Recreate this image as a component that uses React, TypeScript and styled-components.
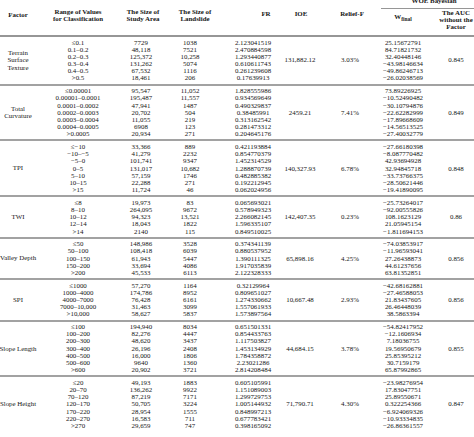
import React from "react";
import styled, { createGlobalStyle } from "styled-components";

const GlobalStyle = createGlobalStyle`
  html, body {
    margin: 0;
    padding: 0;
    background: #ffffff;
    overflow: hidden;
  }
  body {
    width: 474px;
    height: 437px;
    font-family: "Liberation Serif", "Times New Roman", serif;
    font-size: 6.9px;
    color: #161616;
  }
`;

const W = {
  factor: 36,
  range: 84,
  study: 42,
  slide: 56,
  fr: 70,
  ioe: 24,
  relief: 69,
  w: 44,
  auc: 62,
};

type Row = [string, string, string, string, string];

interface GroupData {
  label: string[];
  ioe: string;
  relief: string;
  auc: string;
  rows: Row[];
}

const groups: GroupData[] = [
  {
    label: ["Terrain", "Surface", "Texture"],
    ioe: "131,882.12",
    relief: "3.03%",
    auc: "0.845",
    rows: [
      ["≤0.1", "7729", "1038", "2.123041519", "25.15672791"],
      ["0.1–0.2", "48,118", "7521", "2.470884598", "84.71821732"],
      ["0.2–0.3", "125,372", "10,258", "1.293440877", "32.40448146"],
      ["0.3–0.4", "131,262", "5074", "0.610611743", "−43.98146634"],
      ["0.4–0.5", "67,532", "1116", "0.261239608", "−49.86246713"],
      [">0.5", "18,461", "206", "0.17639913", "−26.02038569"],
    ],
  },
  {
    label: ["Total", "Curvature"],
    ioe: "2459.21",
    relief: "7.41%",
    auc: "0.849",
    rows: [
      ["≤0.00001", "95,547", "11,052", "1.828555986", "73.89226925"],
      ["0.00001–0.0001", "195,487", "11,557", "0.934569649", "−10.52490482"],
      ["0.0001–0.0002", "47,941", "1487", "0.490329837", "−30.10794876"],
      ["0.0002–0.0003", "20,702", "504", "0.38485991", "−22.62282999"],
      ["0.0003–0.0004", "11,055", "219", "0.313162542", "−17.89668609"],
      ["0.0004–0.0005", "6908", "123", "0.281473312", "−14.56513525"],
      [">0.0005", "20,934", "271", "0.204645176", "−27.40032779"],
    ],
  },
  {
    label: ["TPI"],
    ioe: "140,327.93",
    relief: "6.78%",
    auc: "0.848",
    rows: [
      ["≤−10", "33,366", "889", "0.421193884", "−27.66180398"],
      ["−10–−5", "41,279", "2232", "0.854770379", "−8.087770482"],
      ["−5–0", "101,741", "9347", "1.452314529", "42.93694928"],
      ["0–5", "131,017", "10,682", "1.288870739", "32.94845718"],
      ["5–10", "57,159", "1746", "0.482885382", "−33.73766375"],
      ["10–15", "22,288", "271", "0.192212945", "−28.50621446"],
      [">15", "11,724", "46", "0.062024956", "−19.41890095"],
    ],
  },
  {
    label: ["TWI"],
    ioe: "142,407.35",
    relief: "0.23%",
    auc: "0.86",
    rows: [
      ["≤8", "19,973", "83", "0.065693021", "−25.73264017"],
      ["8–10", "264,095", "9672", "0.578949323", "−92.00555826"],
      ["10–12", "94,323", "13,521", "2.266082145", "108.1623129"],
      ["12–14", "18,043", "1822", "1.596335107", "21.05945154"],
      [">14", "2140", "115", "0.849510025", "−1.811694153"],
    ],
  },
  {
    label: ["Valley Depth"],
    ioe: "65,898.16",
    relief: "4.25%",
    auc: "0.856",
    rows: [
      ["≤50", "148,986", "3528", "0.374341139", "−74.03853917"],
      ["50–100", "108,418", "6039", "0.880537952", "−11.96593041"],
      ["100–150", "61,943", "5447", "1.390111325", "27.26438873"],
      ["150–200", "33,694", "4086", "1.917035839", "44.61237656"],
      [">200", "45,533", "6113", "2.122328333", "63.81352851"],
    ],
  },
  {
    label: ["SPI"],
    ioe: "10,667.48",
    relief: "2.93%",
    auc: "0.856",
    rows: [
      ["≤1000", "57,270", "1164", "0.32129964", "−42.68162881"],
      ["1000–4000", "174,786", "8952", "0.809651027", "−27.46588053"],
      ["4000–7000", "76,428", "6161", "1.274330662", "21.83437605"],
      ["7000–10,000", "31,463", "3099", "1.557061933", "26.46448039"],
      [">10,000", "58,627", "5837", "1.573897564", "38.5863394"],
    ],
  },
  {
    label: ["Slope Length"],
    ioe: "44,684.15",
    relief: "3.78%",
    auc: "0.855",
    rows: [
      ["≤100", "194,940", "8034", "0.651501331", "−54.82417952"],
      ["100–200", "82,276", "4447", "0.854433763", "−12.1606934"],
      ["200–300", "48,620", "3437", "1.117503827", "7.18036755"],
      ["300–400", "26,196", "2408", "1.453134929", "19.56950679"],
      ["400–500", "16,000", "1806", "1.784358872", "25.85395212"],
      ["500–600", "9640", "1360", "2.23021286", "30.7159179"],
      [">600", "20,902", "3721", "2.814208484", "65.87992865"],
    ],
  },
  {
    label: ["Slope Height"],
    ioe: "71,790.71",
    relief: "4.30%",
    auc: "0.847",
    rows: [
      ["≤20", "49,193", "1883", "0.605105991", "−23.98276954"],
      ["20–70", "136,262", "9922", "1.151089003", "17.83047751"],
      ["70–120", "87,219", "7171", "1.299729753", "25.89550671"],
      ["120–170", "50,705", "3224", "1.005144932", "0.322254366"],
      ["170–220", "28,954", "1555", "0.848997213", "−6.924069326"],
      ["220–270", "16,583", "711", "0.677783421", "−10.93334835"],
      [">270", "29,659", "747", "0.398165092", "−26.86361557"],
    ],
  },
];

const Table = styled.div`
  width: 487px;
  display: flex;
  flex-direction: column;
`;

const Header = styled.div`
  display: flex;
  height: 35px;
  border-bottom: 2px solid #969696;
  font-weight: bold;
  overflow: hidden;
`;

const HeadCell = styled.div<{ $w: number; $pl?: number; $pb?: number }>`
  flex: none;
  box-sizing: border-box;
  width: ${(p) => p.$w}px;
  padding-left: ${(p) => p.$pl ?? 0}px;
  padding-bottom: ${(p) => p.$pb ?? 4}px;
  display: flex;
  align-items: center;
  justify-content: center;
  white-space: nowrap;
`;

const HeadText = styled.span`
  display: block;
  text-align: center;
  line-height: 6.8px;
`;

const WoeGroup = styled.div`
  flex: none;
  width: ${W.w + W.auc}px;
  display: flex;
  flex-direction: column;
`;

const WoeTitle = styled.div`
  flex: none;
  box-sizing: border-box;
  height: 9px;
  padding-bottom: 3.5px;
  border-bottom: 1px solid #969696;
  display: flex;
  align-items: flex-end;
  justify-content: center;
  white-space: nowrap;
  line-height: 6.8px;
`;

const WoeSub = styled.div`
  flex: 1;
  display: flex;
`;

const Sub = styled.sub`
  font-size: 5.4px;
  vertical-align: -1.5px;
  line-height: 0;
`;

const Group = styled.section<{ $last?: boolean }>`
  display: flex;
  padding: 1.5px 0 2px;
  border-bottom: ${(p) => (p.$last ? "none" : "2px solid #a2a2a2")};
`;

const Col = styled.div<{ $w: number; $pl?: number }>`
  flex: none;
  box-sizing: border-box;
  width: ${(p) => p.$w}px;
  padding-left: ${(p) => p.$pl ?? 0}px;
  display: flex;
  flex-direction: column;
  justify-content: center;
`;

const Cell = styled.div`
  height: 7.2px;
  line-height: 7.2px;
  display: flex;
  justify-content: center;
  white-space: nowrap;
`;

const FactorLabel = styled.div`
  display: flex;
  justify-content: center;
  white-space: nowrap;
`;

const FactorText = styled.span`
  display: block;
  text-align: center;
  line-height: 7.4px;
`;

const withBreaks = (lines: string[]) =>
  lines.map((l, i) => (
    <React.Fragment key={i}>
      {i > 0 && <br />}
      {l}
    </React.Fragment>
  ));

const DataGroup: React.FC<{ g: GroupData; last?: boolean }> = ({ g, last }) => (
  <Group $last={last}>
    <Col $w={W.factor}>
      <FactorLabel>
        <FactorText>{withBreaks(g.label)}</FactorText>
      </FactorLabel>
    </Col>
    <Col $w={W.range}>
      {g.rows.map((r, i) => (
        <Cell key={i}>{r[0]}</Cell>
      ))}
    </Col>
    <Col $w={W.study}>
      {g.rows.map((r, i) => (
        <Cell key={i}>{r[1]}</Cell>
      ))}
    </Col>
    <Col $w={W.slide}>
      {g.rows.map((r, i) => (
        <Cell key={i}>{r[2]}</Cell>
      ))}
    </Col>
    <Col $w={W.fr}>
      {g.rows.map((r, i) => (
        <Cell key={i}>{r[3]}</Cell>
      ))}
    </Col>
    <Col $w={W.ioe}>
      <Cell>{g.ioe}</Cell>
    </Col>
    <Col $w={W.relief} $pl={7}>
      <Cell>{g.relief}</Cell>
    </Col>
    <Col $w={W.w}>
      {g.rows.map((r, i) => (
        <Cell key={i}>{r[4]}</Cell>
      ))}
    </Col>
    <Col $w={W.auc}>
      <Cell>{g.auc}</Cell>
    </Col>
  </Group>
);

export default function App() {
  return (
    <>
      <GlobalStyle />
      <Table>
        <Header>
          <HeadCell $w={W.factor} $pb={4}>
            <HeadText>Factor</HeadText>
          </HeadCell>
          <HeadCell $w={W.range} $pl={0} $pb={3}>
            <HeadText>
              Range of Values
              <br />
              for Classification
            </HeadText>
          </HeadCell>
          <HeadCell $w={W.study} $pl={4} $pb={3}>
            <HeadText>
              The Size of
              <br />
              Study Area
            </HeadText>
          </HeadCell>
          <HeadCell $w={W.slide} $pl={10} $pb={3}>
            <HeadText>
              The Size of
              <br />
              Landslide
            </HeadText>
          </HeadCell>
          <HeadCell $w={W.fr} $pl={26} $pb={7}>
            <HeadText>FR</HeadText>
          </HeadCell>
          <HeadCell $w={W.ioe} $pl={2} $pb={7}>
            <HeadText>IOE</HeadText>
          </HeadCell>
          <HeadCell $w={W.relief} $pl={11} $pb={7}>
            <HeadText>Relief-F</HeadText>
          </HeadCell>
          <WoeGroup>
            <WoeTitle>WOE Bayesian</WoeTitle>
            <WoeSub>
              <HeadCell $w={W.w} $pb={10}>
                <HeadText>
                  W<Sub>final</Sub>
                </HeadText>
              </HeadCell>
              <HeadCell $w={W.auc} $pb={3}>
                <HeadText>
                  The AUC
                  <br />
                  without the
                  <br />
                  Factor
                </HeadText>
              </HeadCell>
            </WoeSub>
          </WoeGroup>
        </Header>
        {groups.map((g, i) => (
          <DataGroup key={i} g={g} last={i === groups.length - 1} />
        ))}
      </Table>
    </>
  );
}
